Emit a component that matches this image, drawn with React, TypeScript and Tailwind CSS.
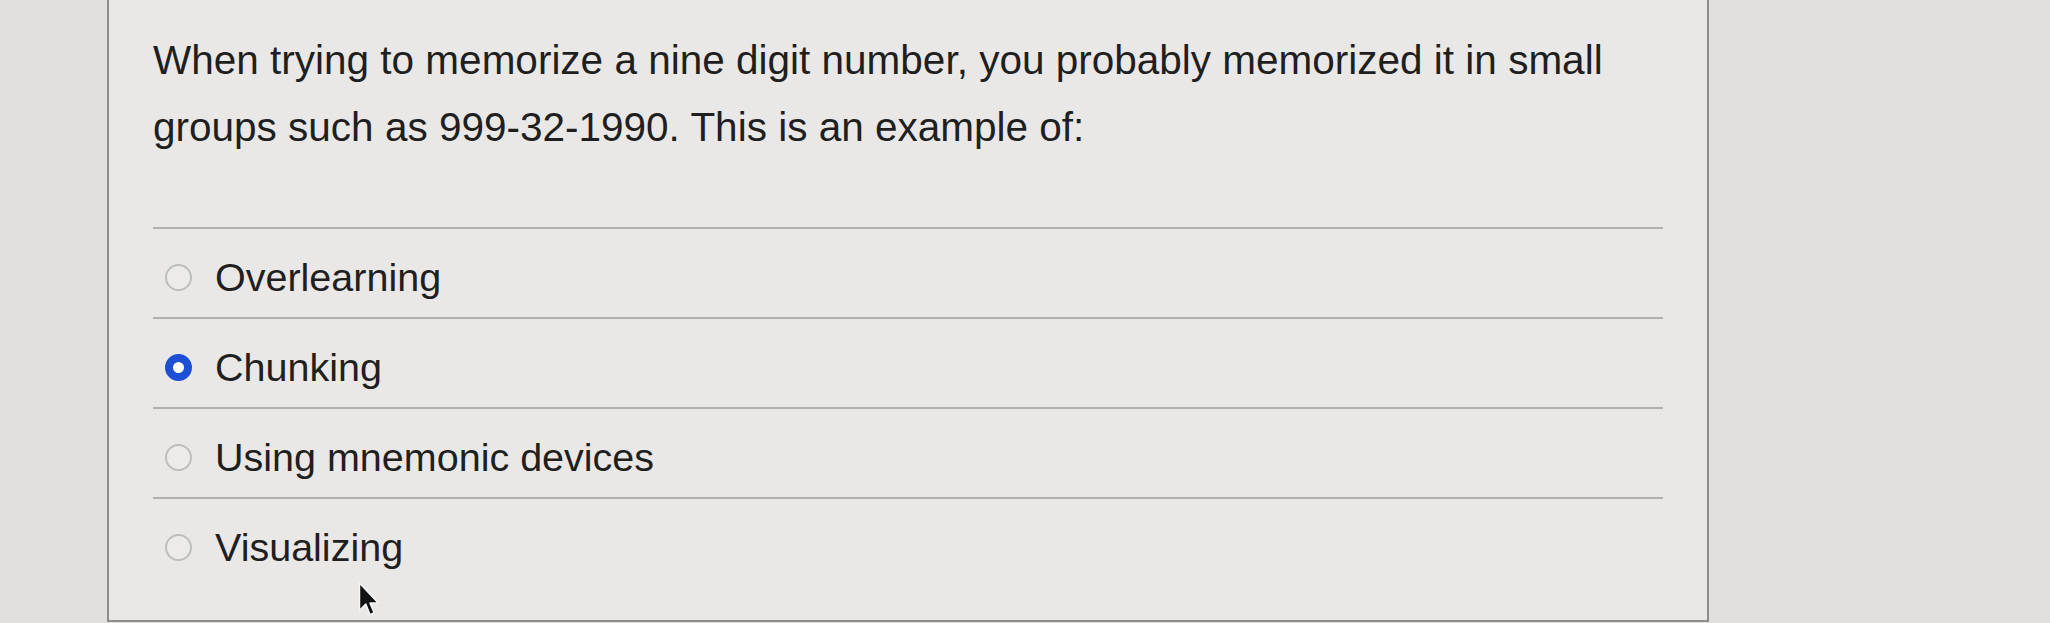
import React from 'react'

const options = [
  { label: 'Overlearning', selected: false },
  { label: 'Chunking', selected: true },
  { label: 'Using mnemonic devices', selected: false },
  { label: 'Visualizing', selected: false },
]

function Radio({ selected }: { selected: boolean }) {
  if (selected) {
    return <span className="block h-[27px] w-[27px] shrink-0 rounded-full border-[8px] border-[#1d4fd6] bg-white" />
  }
  return <span className="block h-[27px] w-[27px] shrink-0 rounded-full border-2 border-[#bdbdbb] bg-[#ecebe9]" />
}

export default function App() {
  return (
    <div
      className="relative flex h-[623px] w-[2050px] overflow-hidden bg-[#e1e0de] text-[#1f1f1f]"
      style={{ fontFamily: '"Liberation Sans", Arial, sans-serif' }}
    >
      <div className="ml-[107px] h-[622px] w-[1602px] border-x-2 border-b-2 border-[#8c8c8a] bg-[#e9e8e6] px-[44px] pt-[27px]">
        <p className="text-[40.5px] leading-[67px]">
          When trying to memorize a nine digit number, you probably memorized it in small
          <br />
          groups such as 999-32-1990. This is an example of:
        </p>

        <div className="mt-[66px] border-t-2 border-[#b0b0ae]">
          {options.map((opt, i) => (
            <div
              key={opt.label}
              className={
                'flex h-[90px] items-start gap-[23px] pl-[12px] pt-[28px] ' +
                (i < options.length - 1 ? 'border-b-2 border-[#b0b0ae]' : '')
              }
            >
              <div className="flex h-[40px] items-center">
                <Radio selected={opt.selected} />
              </div>
              <span className="text-[39.5px] leading-[40px]">{opt.label}</span>
            </div>
          ))}
        </div>
      </div>

      {/* mouse pointer */}
      <svg
        className="absolute left-[357px] top-[582px]"
        width="26"
        height="38"
        viewBox="0 0 24 36"
      >
        <path
          d="M2 1 L2 27 L8 21 L12 31 L16 29 L12 20 L20 20 Z"
          fill="#111"
          stroke="#f4f4f4"
          strokeWidth="1.5"
          strokeLinejoin="round"
        />
      </svg>
    </div>
  )
}
